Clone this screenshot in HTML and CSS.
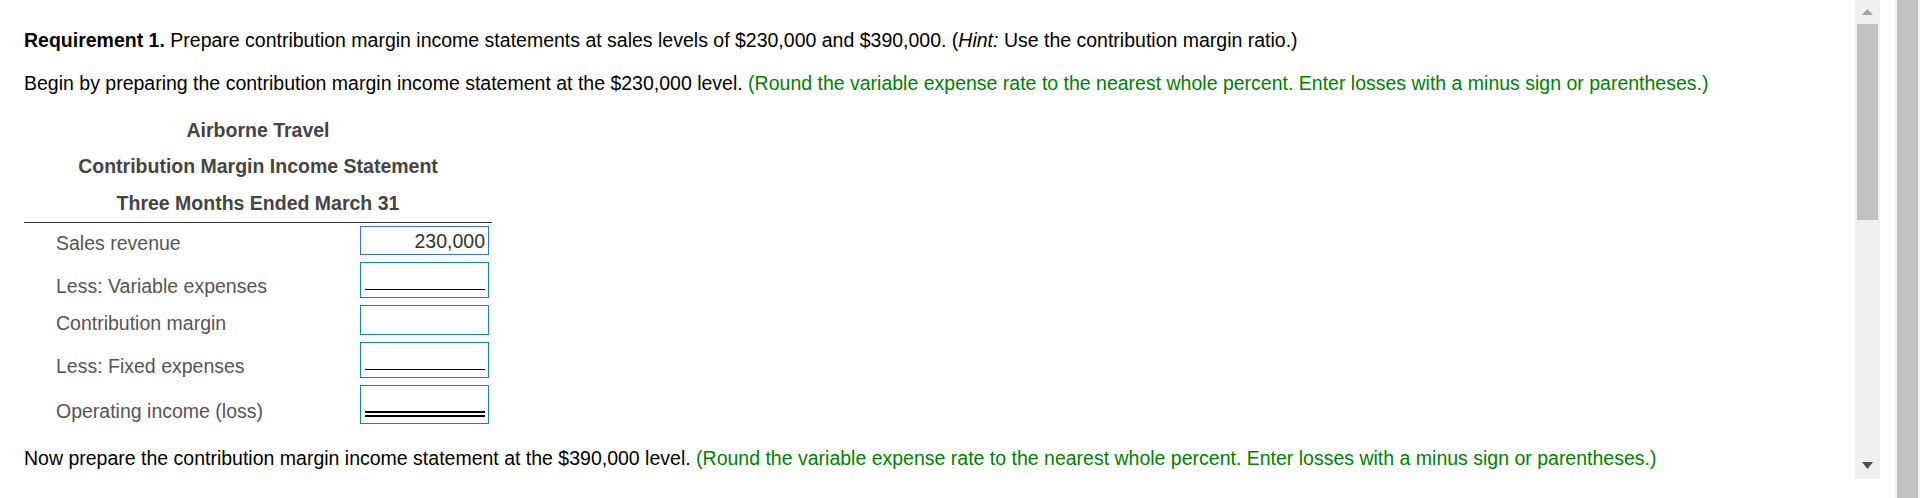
FILE: index.html
```html
<!DOCTYPE html>
<html lang="en">
<head>
<meta charset="utf-8">
<title>Contribution Margin Income Statement</title>
<link rel="stylesheet" href="styles.css">
</head>
<body>
<div class="page">
  <main class="content">
    <p class="line line-first"><b>Requirement 1.</b> Prepare contribution margin income statements at sales levels of $230,000 and $390,000. (<i>Hint:</i> Use the contribution margin ratio.)</p>
    <p class="line line-second">Begin by preparing the contribution margin income statement at the $230,000 level. <span class="green">(Round the variable expense rate to the nearest whole percent. Enter losses with a minus sign or parentheses.)</span></p>

    <div class="statement">
      <div class="titles">
        <div class="title">Airborne Travel</div>
        <div class="title">Contribution Margin Income Statement</div>
        <div class="title">Three Months Ended March 31</div>
      </div>
      <div class="row">
        <div class="label">Sales revenue</div>
        <div class="box box-active box-h29"><span class="val">230,000</span></div>
      </div>
      <div class="row">
        <div class="label">Less: Variable expenses</div>
        <div class="box box-h36"><div class="rule single"></div></div>
      </div>
      <div class="row">
        <div class="label">Contribution margin</div>
        <div class="box box-h30"></div>
      </div>
      <div class="row">
        <div class="label">Less: Fixed expenses</div>
        <div class="box box-h36"><div class="rule single"></div></div>
      </div>
      <div class="row">
        <div class="label label-low">Operating income (loss)</div>
        <div class="box box-h39"><div class="rule double"></div></div>
      </div>
    </div>

    <p class="line line-last">Now prepare the contribution margin income statement at the $390,000 level. <span class="green">(Round the variable expense rate to the nearest whole percent. Enter losses with a minus sign or parentheses.)</span></p>
  </main>

  <div class="vscroll">
    <div class="vbtn vbtn-up">
      <svg width="11" height="6" viewBox="0 0 11 6"><polygon points="5.5,0 11,6 0,6" fill="#a3a3a3"/></svg>
    </div>
    <div class="vthumb"></div>
    <div class="vtrack"></div>
    <div class="vbtn vbtn-down">
      <svg width="11" height="7" viewBox="0 0 11 7"><polygon points="0,0 11,0 5.5,7" fill="#505050"/></svg>
    </div>
  </div>
  <div class="gap"></div>
  <div class="pscroll"><div class="pthumb"></div></div>
</div>
</body>
</html>
```

FILE: styles.css
```css
html, body {
  margin: 0;
  padding: 0;
  background: #fff;
}

body {
  font-family: "Liberation Sans", Arial, sans-serif;
  font-size: 19.5px;
  color: #000;
  overflow: hidden;
}

.page {
  display: flex;
  width: 1920px;
  height: 498px;
  overflow: hidden;
}

.content {
  flex: 1;
  min-width: 0;
  padding: 29px 0 0 24px;
}

.line {
  margin: 0;
  line-height: 22px;
  white-space: nowrap;
}

.line-second {
  margin-top: 21px;
}

.line-last {
  margin-top: 19px;
}

.green {
  color: #008000;
}

.statement {
  width: 468px;
  margin-top: 17px;
}

.titles {
  border-bottom: 1px solid #333;
}

.title {
  text-align: center;
  font-weight: bold;
  font-size: 19.5px;
  color: #444;
  line-height: 37px;
}

.title:first-child {
  padding-top: 1px;
  line-height: 36px;
}

.row {
  display: flex;
  align-items: flex-end;
  justify-content: space-between;
  padding: 3px 3px 4px 0;
}

.label {
  color: #555;
  line-height: 22px;
  padding-left: 32px;
  margin-bottom: 1px;
}

.label-low {
  margin-bottom: 2px;
}

.box {
  box-sizing: border-box;
  width: 129px;
  border: 1px solid #1787a0;
  display: flex;
  flex-direction: column;
  justify-content: flex-end;
  align-items: stretch;
  padding: 0 3px 0 4px;
}

.box-active {
  border-color: #3f6fcf;
  justify-content: center;
}

.box-h29 { height: 29px; }
.box-h30 { height: 30px; }
.box-h36 { height: 36px; padding-bottom: 7px; }
.box-h39 { height: 39px; padding-bottom: 6px; }

.val {
  display: block;
  text-align: right;
  color: #333;
  line-height: 22px;
  padding-right: 0;
  margin-top: 1px;
}

.rule.single {
  height: 0;
  border-top: 1px solid #000;
}

.rule.double {
  height: 0;
  border-top: 6px double #000;
}

/* inner scroll bar */
.vscroll {
  width: 25px;
  height: 479px;
  background: #f0f0f0;
  display: flex;
  flex-direction: column;
  align-items: center;
  flex-shrink: 0;
}

.vbtn {
  height: 24px;
  width: 25px;
  display: flex;
  justify-content: center;
}

.vbtn svg {
  display: block;
}

.vbtn-up {
  align-items: flex-start;
  padding-top: 9px;
  box-sizing: border-box;
}

.vbtn-down {
  align-items: flex-start;
  padding-top: 7px;
  box-sizing: border-box;
}

.vthumb {
  width: 21px;
  height: 196px;
  background: #c1c1c1;
}

.vtrack {
  flex: 1;
}

.gap {
  width: 15px;
  flex-shrink: 0;
}

/* page scroll bar */
.pscroll {
  width: 25px;
  height: 498px;
  background: #f1f1f1;
  padding: 0 2px;
  box-sizing: border-box;
  flex-shrink: 0;
}

.pthumb {
  height: 100%;
  background: #c1c1c1;
}
```
